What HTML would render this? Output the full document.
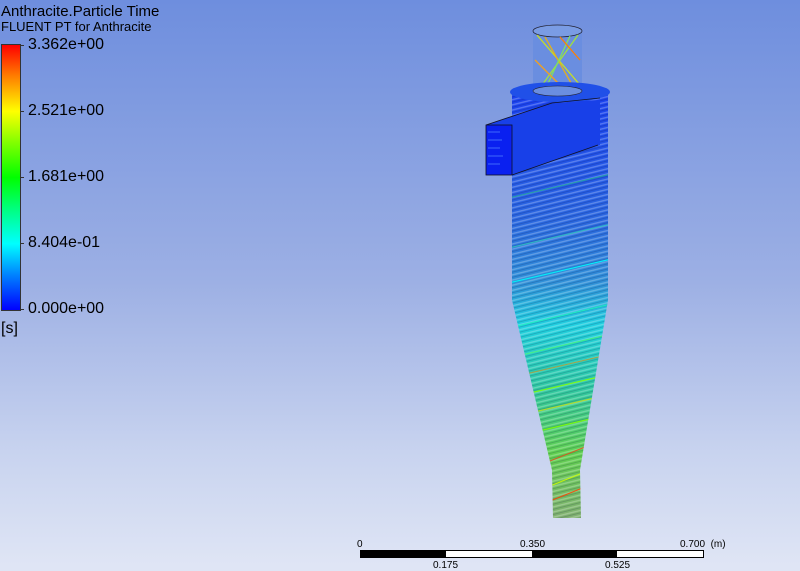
<!DOCTYPE html>
<html style="background:#dfe5f5"><head><style>
html,body{margin:0;padding:0}
body{width:800px;height:565px;overflow:hidden;position:relative;background:linear-gradient(#6e8ede 0%,#9db0e4 50%,#c8d3ef 80%,#dfe5f5 100%);font-family:"Liberation Sans",sans-serif;color:#000}
.t{position:absolute;left:1px;white-space:nowrap}
.lab{position:absolute;left:28px;font-size:16px}
.bar{position:absolute;left:1px;top:44px;width:18px;height:265px;border:1px solid #333;background:linear-gradient(#ff0000 0%,#ff8000 12%,#ffff00 25%,#80ff00 37%,#00ff00 50%,#00ff80 62%,#00ffff 75%,#0080ff 87%,#0000ff 100%)}
.tick{position:absolute;left:20px;width:4px;height:1px;background:#333}
.sl{position:absolute;font-size:10px}
</style></head><body>
<div class="t" style="top:3px;font-size:15px">Anthracite.Particle Time</div>
<div class="t" style="top:19px;font-size:13px">FLUENT PT for Anthracite</div>
<div class="bar"></div>
<div class="tick" style="top:45px"></div><div class="tick" style="top:111px"></div><div class="tick" style="top:177px"></div><div class="tick" style="top:243px"></div><div class="tick" style="top:309px"></div>
<div class="lab" style="top:36px">3.362e+00</div>
<div class="lab" style="top:102px">2.521e+00</div>
<div class="lab" style="top:168px">1.681e+00</div>
<div class="lab" style="top:234px">8.404e-01</div>
<div class="lab" style="top:300px">0.000e+00</div>
<div class="t" style="top:320px;font-size:16px">[s]</div>

<svg width="800" height="565" style="position:absolute;left:0;top:0">
<defs>
<linearGradient id="g" x1="0" y1="0" x2="0" y2="1">
<stop offset="0" stop-color="#1a40f0"/><stop offset="0.3" stop-color="#2a66e0"/><stop offset="0.45" stop-color="#3090d8"/><stop offset="0.55" stop-color="#20d0e0"/><stop offset="0.7" stop-color="#30c8a0"/><stop offset="0.85" stop-color="#60d050"/><stop offset="1" stop-color="#80b070"/>
</linearGradient>
<pattern id="p" width="40" height="5" patternUnits="userSpaceOnUse" patternTransform="rotate(-14)">
<rect width="40" height="1.4" fill="#ffffff" opacity="0.25"/>
<rect y="2.6" width="40" height="0.8" fill="#000030" opacity="0.2"/>
</pattern>
<clipPath id="c"><path d="M512,90 L608,90 L608,300 L580,470 L581,518 L553,518 L552,470 L512,300 Z"/></clipPath>
</defs>
<path d="M512,90 L608,90 L608,300 L580,470 L581,518 L553,518 L552,470 L512,300 Z" fill="url(#g)"/>
<path d="M512,90 L608,90 L608,300 L580,470 L581,518 L553,518 L552,470 L512,300 Z" fill="url(#p)"/>
<g clip-path="url(#c)" stroke-width="1.2" fill="none" opacity="0.85">
<path d="M500,200 L620,172" stroke="#20a0a0"/>
<path d="M500,250 L620,222" stroke="#30c0c0"/>
<path d="M500,285 L620,257" stroke="#00ffff"/>
<path d="M500,330 L620,302" stroke="#20f0c0"/>
<path d="M500,360 L620,332" stroke="#40f080"/>
<path d="M500,380 L620,352" stroke="#a0a040"/>
<path d="M500,400 L620,372" stroke="#80ff00"/>
<path d="M500,420 L620,392" stroke="#c0e020"/>
<path d="M500,440 L620,412" stroke="#80ff00"/>
<path d="M540,465 L590,445" stroke="#e05020"/>
<path d="M540,490 L590,470" stroke="#d0ff00"/>
<path d="M540,505 L590,485" stroke="#ff4000"/>
</g>
<!-- top pipe -->
<rect x="533" y="31" width="49" height="60" fill="#6a8ee0"/>
<ellipse cx="557.5" cy="31" rx="24.5" ry="6" fill="#7a9ce4" stroke="#223" stroke-width="0.7"/>
<g stroke-width="1.3" fill="none">
<path d="M537,35 L580,85" stroke="#c8e020"/><path d="M578,35 L540,88" stroke="#a0e040"/>
<path d="M545,37 L575,90" stroke="#e0b020"/><path d="M570,36 L545,90" stroke="#80e060"/>
<path d="M560,37 L580,60" stroke="#ff8000"/><path d="M535,60 L565,90" stroke="#f0a020"/>
</g>
<!-- top plate -->
<ellipse cx="560" cy="92" rx="50" ry="10" fill="#2050e8"/>
<ellipse cx="557.5" cy="91" rx="24.5" ry="5" fill="#6a8ee0" stroke="#223" stroke-width="0.6"/>
<!-- inlet -->
<path d="M486,125 L552,103 L600,100 L600,145 L512,175 Z" fill="#1840e8"/>
<path d="M486,125 L552,103 L600,98" stroke="#112" fill="none" stroke-width="0.8"/>
<path d="M512,175 L598,145" stroke="#112" fill="none" stroke-width="0.8"/>
<rect x="486" y="125" width="26" height="50" fill="#0a20f0" stroke="#112" stroke-width="0.8"/>
<g stroke="#5080ff" stroke-width="0.8"><path d="M488,132 H500 M488,140 H502 M488,148 H500 M488,156 H503 M488,164 H500"/></g>
<!-- scale bar -->
<rect x="360.5" y="550.5" width="343" height="7" fill="#fff" stroke="#000"/>
<rect x="361" y="551" width="85" height="6" fill="#000"/>
<rect x="532" y="551" width="85" height="6" fill="#000"/>
</svg>
<div class="sl" style="left:357px;top:539px">0</div>
<div class="sl" style="left:520px;top:539px">0.350</div>
<div class="sl" style="left:680px;top:539px">0.700 &nbsp;(m)</div>
<div class="sl" style="left:433px;top:560px">0.175</div>
<div class="sl" style="left:605px;top:560px">0.525</div>
</body></html>
